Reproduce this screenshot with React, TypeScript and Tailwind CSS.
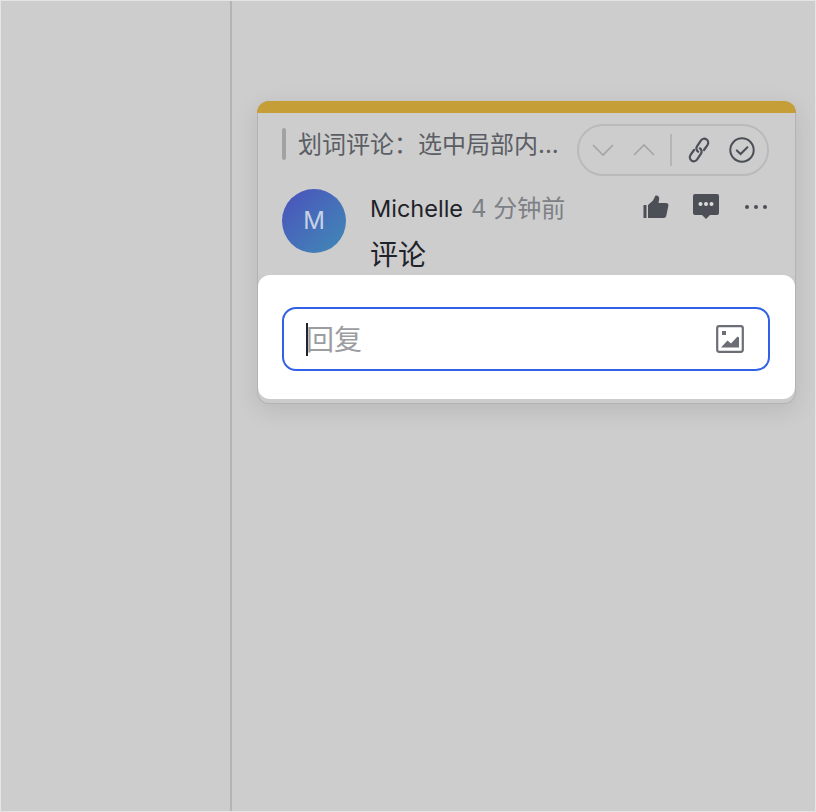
import React from 'react';

const FONT = 'Inter, "Noto Sans CJK SC", sans-serif';

const ChevronDown = () => (
  <svg width="22" height="14" viewBox="0 0 22 14" fill="none" stroke="#a3a4a7" strokeWidth="1.6">
    <path d="M1 2 11 12 21 2" />
  </svg>
);

const ChevronUp = () => (
  <svg width="22" height="14" viewBox="0 0 22 14" fill="none" stroke="#a3a4a7" strokeWidth="1.6">
    <path d="M1 12 11 2 21 12" />
  </svg>
);

const LinkIcon = () => (
  <svg width="22" height="26" viewBox="0 0 22 26" fill="none" stroke="#4c4f56" strokeWidth="2.2" strokeLinecap="round">
    <path d="M16 13 19.6 7.8a4 4 0 0 0 -6.6 -4.5L9 9.3a3.8 3.8 0 0 0 1.2 5.4" />
    <path d="M6 13 2.4 18.2a4 4 0 0 0 6.6 4.5L13 16.7a3.8 3.8 0 0 0 -1.2 -5.4" />
  </svg>
);

const CheckCircle = () => (
  <svg width="26" height="26" viewBox="0 0 26 26" fill="none" stroke="#4c4f56" strokeWidth="2">
    <circle cx="13" cy="13" r="11.7" />
    <path d="M7.8 13.4 11.6 17 18.4 10.2" strokeLinecap="round" />
  </svg>
);

const ThumbIcon = () => (
  <svg width="26" height="26" viewBox="0 0 26 26" fill="#4c4f56">
    <rect x="0.5" y="11" width="3" height="13" rx="0.5" />
    <path d="M5 11 10 6.5 12.5 1.5C14.8 1 16.5 2.6 16.2 5L15.5 9H23c1.6 0 2.7 1.3 2.4 2.8L23.2 22c-.3 1.2-1.3 2-2.5 2H5Z" />
  </svg>
);

const CommentIcon = () => (
  <svg width="26" height="25" viewBox="0 0 26 25" fill="#4c4f56">
    <path d="M2 0h22a2 2 0 0 1 2 2v17a2 2 0 0 1 -2 2h-7l-4 4 -4 -4H2a2 2 0 0 1 -2 -2V2a2 2 0 0 1 2 -2Z" />
    <circle cx="7.5" cy="10" r="2" fill="#dcdcdc" />
    <circle cx="13" cy="10" r="2" fill="#dcdcdc" />
    <circle cx="18.5" cy="10" r="2" fill="#dcdcdc" />
  </svg>
);

const DotsIcon = () => (
  <svg width="24" height="6" viewBox="0 0 24 6" fill="#4c4f56">
    <circle cx="3" cy="3" r="2" />
    <circle cx="12" cy="3" r="2" />
    <circle cx="21" cy="3" r="2" />
  </svg>
);

const ImageIcon = () => (
  <svg width="28" height="28" viewBox="0 0 28 28" fill="none">
    <rect x="1.2" y="1.2" width="25.6" height="25.6" rx="2" stroke="#6b6e75" strokeWidth="2.2" />
    <rect x="6" y="6" width="4" height="4" fill="#6b6e75" />
    <path d="M5 22.5 11.5 15.5 15 18.5 21.5 11.5 23 12.5V22.5Z" fill="#6b6e75" />
  </svg>
);

export default function App() {
  return (
    <div
      className="h-[812px] w-[816px] overflow-hidden border border-[#e4e4e4] bg-[#cdcdcd]"
      style={{ fontFamily: FONT }}
    >
      <div className="flex h-full">
        <div className="w-[231px] shrink-0 border-r-2 border-[#b4b4b4]" />
        <div className="pl-[25px] pt-[100px]">
          <div className="w-[539px] overflow-hidden rounded-xl bg-[#b3b3b3] shadow-[0_6px_24px_rgba(0,0,0,0.1)]">
            <div className="h-[12px] bg-[#c69e38]" />

            <div className="mx-[1px] mb-[1px] rounded-b-[11px] bg-[#cbcbcb] pb-[4px]">
              <div className="h-[162px] bg-[#cdcdcd] pl-[24px] pr-[27px] pt-[11px]">
                <div className="flex items-start">
                  <div className="mt-[4px] h-[32px] w-[4px] shrink-0 rounded-sm bg-[#a1a2a4]" />
                  <div className="ml-[12px] mt-[5px] w-[263px] shrink-0 whitespace-nowrap text-[24px] leading-[32px] text-[#5b5e64]">
                    划词评论：选中局部内...
                  </div>
                  <div className="ml-[16px] flex h-[52px] w-[192px] shrink-0 items-center rounded-full border-2 border-[#b9babc] pl-[13px]">
                    <ChevronDown />
                    <div className="ml-[19px]"><ChevronUp /></div>
                    <div className="ml-[15px] h-[32px] w-[2px] bg-[#b4b5b7]" />
                    <div className="ml-[16px]"><LinkIcon /></div>
                    <div className="ml-[19px]"><CheckCircle /></div>
                  </div>
                </div>

                <div className="flex pt-[13px]">
                  <div className="flex h-[64px] w-[64px] shrink-0 items-center justify-center rounded-full bg-gradient-to-br from-[#4a4fbc] to-[#3f8ab5] text-[24px] text-[#c6d2e4]">
                    M
                  </div>
                  <div className="ml-[24px] flex-1 pt-[1px]">
                    <div className="flex h-[36px] items-center text-[24px] leading-[32px]">
                      <span className="mt-[1px] text-[23.5px] text-[#1f2329]">Michelle</span>
                      <span className="ml-[8px] mt-[1px] text-[#7d8085]">4 分钟前</span>
                      <div className="-mt-[3px] ml-auto flex items-center">
                        <ThumbIcon />
                        <div className="ml-[24px]"><CommentIcon /></div>
                        <div className="ml-[25px]"><DotsIcon /></div>
                      </div>
                    </div>
                    <div className="mt-[10px] text-[28px] leading-[38px] text-[#1f2329]">评论</div>
                  </div>
                </div>
              </div>

              <div className="h-[124px] rounded-xl bg-white pl-[24px] pr-[25px] pt-[32px]">
                <div className="flex h-[64px] items-center rounded-[14px] border-2 border-[#3260e6] pl-[22px] pr-[24px]">
                  <div className="h-[33px] w-[2px] bg-[#1f2329]" />
                  <span className="-ml-[2px] mt-[2px] text-[28px] leading-[38px] text-[#9b9da1]">回复</span>
                  <div className="ml-auto"><ImageIcon /></div>
                </div>
              </div>
            </div>
          </div>
        </div>
      </div>
    </div>
  );
}
